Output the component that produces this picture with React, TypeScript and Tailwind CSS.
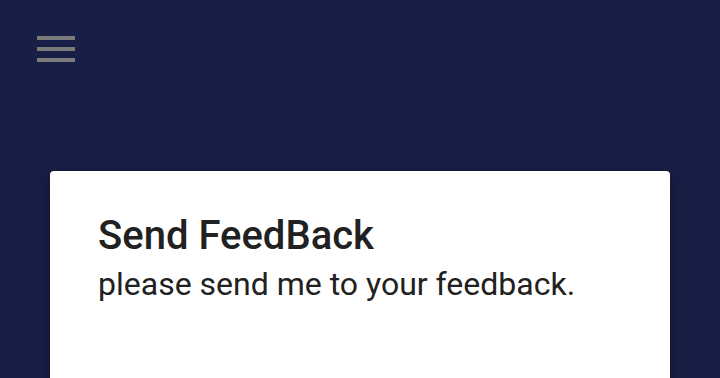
export default function App() {
  return (
    <div className="h-[378px] overflow-hidden bg-[#181f47] font-['Roboto',sans-serif]">
      <div className="px-[37px] pt-[36px]">
        <button className="flex w-[38px] flex-col gap-[7px]">
          <span className="h-[4px] w-full bg-[#7b7b7b]" />
          <span className="h-[4px] w-full bg-[#7b7b7b]" />
          <span className="h-[4px] w-full bg-[#7b7b7b]" />
        </button>
      </div>
      <div className="mx-[50px] mt-[109px] h-[400px] rounded-[4px] bg-white px-[48px] pt-[41px] shadow-[0_4px_20px_rgba(0,0,0,0.35)]">
        <h1 className="text-[40px] font-medium leading-[48px] text-[#212121]">Send FeedBack</h1>
        <p className="text-[32px] leading-[48px] text-[#212121]">please send me to your feedback.</p>
      </div>
    </div>
  );
}
